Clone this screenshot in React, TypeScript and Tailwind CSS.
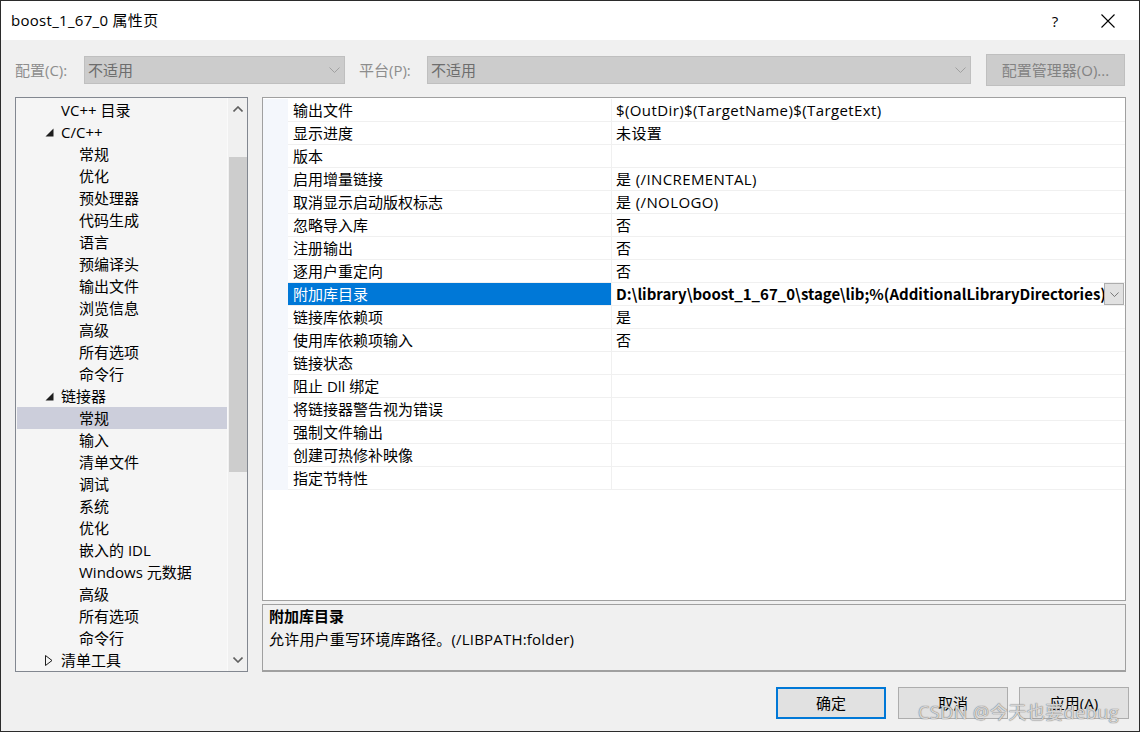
import React from "react";

const treeItems: { t: string; lvl: number; icon?: "exp" | "col"; sel?: boolean }[] = [
  { t: "VC++ 目录", lvl: 0 },
  { t: "C/C++", lvl: 0, icon: "exp" },
  { t: "常规", lvl: 1 },
  { t: "优化", lvl: 1 },
  { t: "预处理器", lvl: 1 },
  { t: "代码生成", lvl: 1 },
  { t: "语言", lvl: 1 },
  { t: "预编译头", lvl: 1 },
  { t: "输出文件", lvl: 1 },
  { t: "浏览信息", lvl: 1 },
  { t: "高级", lvl: 1 },
  { t: "所有选项", lvl: 1 },
  { t: "命令行", lvl: 1 },
  { t: "链接器", lvl: 0, icon: "exp" },
  { t: "常规", lvl: 1, sel: true },
  { t: "输入", lvl: 1 },
  { t: "清单文件", lvl: 1 },
  { t: "调试", lvl: 1 },
  { t: "系统", lvl: 1 },
  { t: "优化", lvl: 1 },
  { t: "嵌入的 IDL", lvl: 1 },
  { t: "Windows 元数据", lvl: 1 },
  { t: "高级", lvl: 1 },
  { t: "所有选项", lvl: 1 },
  { t: "命令行", lvl: 1 },
  { t: "清单工具", lvl: 0, icon: "col" },
];

const props: { n: string; v: string; sel?: boolean }[] = [
  { n: "输出文件", v: "$(OutDir)$(TargetName)$(TargetExt)" },
  { n: "显示进度", v: "未设置" },
  { n: "版本", v: "" },
  { n: "启用增量链接", v: "是 (/INCREMENTAL)" },
  { n: "取消显示启动版权标志", v: "是 (/NOLOGO)" },
  { n: "忽略导入库", v: "否" },
  { n: "注册输出", v: "否" },
  { n: "逐用户重定向", v: "否" },
  { n: "附加库目录", v: "D:\\library\\boost_1_67_0\\stage\\lib;%(AdditionalLibraryDirectories)", sel: true },
  { n: "链接库依赖项", v: "是" },
  { n: "使用库依赖项输入", v: "否" },
  { n: "链接状态", v: "" },
  { n: "阻止 Dll 绑定", v: "" },
  { n: "将链接器警告视为错误", v: "" },
  { n: "强制文件输出", v: "" },
  { n: "创建可热修补映像", v: "" },
  { n: "指定节特性", v: "" },
];

function Chevron({ color = "#a0a0a0", w = 11, h = 6 }: { color?: string; w?: number; h?: number }) {
  return (
    <svg width={w} height={h} viewBox="0 0 11 6">
      <path d="M0.5 0.5 L5.5 5.5 L10.5 0.5" fill="none" stroke={color} strokeWidth="1" />
    </svg>
  );
}

export default function App() {
  return (
    <div className="relative w-[1140px] h-[732px] bg-[#f0f0f0] border border-[#2b2b2b] flex flex-col text-black text-[15px] font-['Open_Sans','Noto_Sans_CJK_SC',sans-serif] overflow-hidden">
      {/* Title bar */}
      <div className="h-[39px] bg-white flex items-center shrink-0">
        <div className="pl-[10px] text-[15px] leading-[20px] pb-[1px] tracking-[0.3px]">boost_1_67_0 属性页</div>
        <div className="flex-1" />
        <div className="w-[20px] text-center text-[15px] leading-[20px] mr-[36px]">?</div>
        <div className="mr-[24px] flex items-center">
          <svg width="14" height="14" viewBox="0 0 14 14">
            <path d="M0.5 0.5 L13.5 13.5 M13.5 0.5 L0.5 13.5" stroke="#000" strokeWidth="1.1" />
          </svg>
        </div>
      </div>

      {/* Config row */}
      <div className="mt-[14px] h-[32px] flex items-center shrink-0 pl-[14px] pr-[13px]">
        <div className="w-[69px] text-[#8d8d8d] leading-[20px] pb-[1px]">配置(C):</div>
        <div className="w-[261px] h-[28px] bg-[#cccccc] border border-[#bfbfbf] flex items-center pl-[3px] pr-[4px]">
          <span className="flex-1 text-[#6d6d6d] leading-[20px] pb-[1px]">不适用</span>
          <Chevron />
        </div>
        <div className="ml-[14px] w-[68px] text-[#8d8d8d] leading-[20px] pb-[1px]">平台(P):</div>
        <div className="w-[544px] h-[28px] bg-[#cccccc] border border-[#bfbfbf] flex items-center pl-[3px] pr-[4px]">
          <span className="flex-1 text-[#6d6d6d] leading-[20px] pb-[1px]">不适用</span>
          <Chevron />
        </div>
        <div className="ml-[15px] w-[139px] h-[32px] bg-[#cccccc] border border-[#bfbfbf] flex items-center justify-center text-[#838383] leading-[20px] pb-[1px]">
          配置管理器(O)...
        </div>
      </div>

      {/* Main */}
      <div className="mt-[11px] flex pl-[14px] pr-[13px] h-[575px] shrink-0">
        {/* Tree */}
        <div className="w-[233px] h-full border border-[#828790] bg-[#f5f5f5] flex">
          <div className="flex-1 pt-[1px] flex flex-col pl-[1px]">
            {treeItems.map((it, i) => (
              <div
                key={i}
                className={`h-[22px] flex items-center shrink-0 pb-[1px] ${it.sel ? "bg-[#cccedb]" : ""}`}
              >
                {it.lvl === 0 ? (
                  <>
                    <div className="w-[44px] flex items-center pl-[28px] pt-[1px]">
                      {it.icon === "exp" && (
                        <svg width="9" height="9" viewBox="0 0 9 9">
                          <path d="M8.5 0.5 L8.5 8.5 L0.5 8.5 Z" fill="#1e1e1e" />
                        </svg>
                      )}
                      {it.icon === "col" && (
                        <svg width="8" height="11" viewBox="0 0 8 11">
                          <path d="M0.5 0.5 L7 5.5 L0.5 10.5 Z" fill="none" stroke="#1e1e1e" strokeWidth="1" />
                        </svg>
                      )}
                    </div>
                    <span className="leading-[20px] whitespace-nowrap">{it.t}</span>
                  </>
                ) : (
                  <span className="pl-[62px] leading-[20px] whitespace-nowrap">{it.t}</span>
                )}
              </div>
            ))}
          </div>
          {/* Scrollbar */}
          <div className="w-[20px] h-full bg-[#f0f0f0] border-l border-[#fafafa] flex flex-col items-center">
            <div className="h-[22px] w-full flex items-center justify-center shrink-0">
              <svg width="10" height="6" viewBox="0 0 10 6">
                <path d="M0.5 5.5 L5 1 L9.5 5.5" fill="none" stroke="#606060" strokeWidth="1.6" />
              </svg>
            </div>
            <div className="h-[37px] shrink-0" />
            <div className="w-[18px] h-[315px] bg-[#cdcdcd] shrink-0" />
            <div className="flex-1" />
            <div className="h-[22px] w-full flex items-center justify-center shrink-0">
              <svg width="10" height="6" viewBox="0 0 10 6">
                <path d="M0.5 0.5 L5 5 L9.5 0.5" fill="none" stroke="#606060" strokeWidth="1.6" />
              </svg>
            </div>
          </div>
        </div>

        {/* Right column */}
        <div className="ml-[14px] w-[864px] h-full flex flex-col">
          <div className="h-[504px] border border-[#a0a0a0] bg-white pt-[1px] flex flex-col">
            {props.map((p, i) => (
              <div key={i} className="h-[23px] flex shrink-0">
                <div className="w-[25px] bg-[#f4f7fc] shrink-0" />
                <div
                  className={`w-[323px] shrink-0 flex items-center pl-[5px] pb-[1px] border-b border-[#f0f0f0] ${
                    p.sel ? "bg-[#0078d7] text-white" : ""
                  }`}
                >
                  <span className="leading-[20px] whitespace-nowrap">{p.n}</span>
                </div>
                <div className="w-[1px] bg-[#f0f0f0] shrink-0" />
                <div className="flex-1 flex items-center pl-[4px] border-b border-[#f0f0f0] min-w-0">
                  <span
                    className={`flex-1 leading-[20px] pb-[1px] whitespace-nowrap overflow-hidden ${
                      p.sel ? "font-bold font-['Noto_Sans_CJK_SC',sans-serif]" : "tracking-[0.4px]"
                    }`}
                  >
                    {p.v}
                  </span>
                  {p.sel && (
                    <div className="w-[20px] h-[22px] bg-[#e1e1e1] border border-[#adadad] flex items-center justify-center mr-[1px] shrink-0">
                      <Chevron color="#606060" w={9} h={5} />
                    </div>
                  )}
                </div>
              </div>
            ))}
            <div className="flex-1 flex">
              <div className="w-[25px]" />
            </div>
          </div>
          <div className="mt-[3px] h-[68px] border border-[#a0a0a0] border-b-2 bg-[#f0f0f0] pl-[6px] pt-0">
            <div className="font-bold leading-[22px]">附加库目录</div>
            <div className="leading-[22px] mt-[1px] tracking-[0.2px]">允许用户重写环境库路径。(/LIBPATH:folder)</div>
          </div>
        </div>
      </div>

      {/* Buttons */}
      <div className="mt-[15px] h-[32px] flex justify-end pr-[10px] shrink-0">
        <div className="w-[110px] h-[32px] bg-[#e1e1e1] border-2 border-[#0078d7] flex items-center justify-center leading-[20px] pb-[1px]">
          确定
        </div>
        <div className="ml-[12px] w-[110px] h-[32px] bg-[#e1e1e1] border border-[#adadad] flex items-center justify-center leading-[20px] pb-[1px]">
          取消
        </div>
        <div className="ml-[11px] w-[110px] h-[32px] bg-[#e1e1e1] border border-[#adadad] flex items-center justify-center leading-[20px] pb-[1px]">
          应用(A)
        </div>
      </div>

      {/* Watermark */}
      <div className="absolute left-[917px] top-[700px] text-[18px] leading-[22px] tracking-[0.5px] text-white/70 [text-shadow:0_0_1px_#777,0_0_1px_#777] whitespace-nowrap">
        CSDN @今天也要debug
      </div>
    </div>
  );
}
